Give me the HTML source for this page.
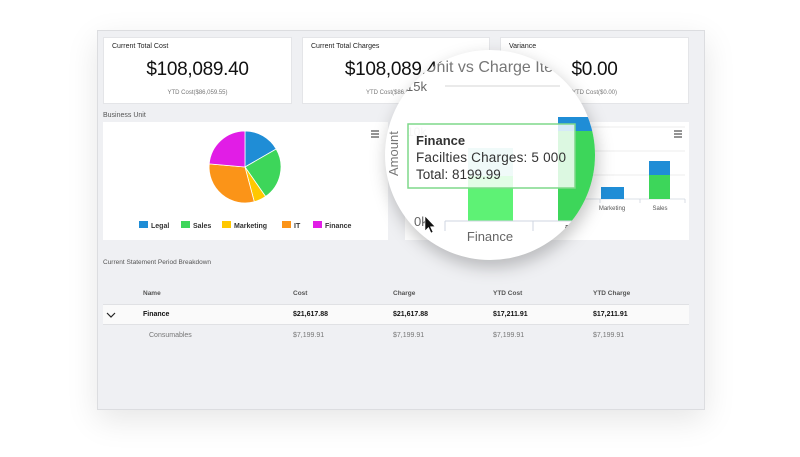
<!DOCTYPE html>
<html><head><meta charset="utf-8"><style>
*{margin:0;padding:0;box-sizing:border-box}
body{width:800px;height:457px;background:#fff;font-family:"Liberation Sans",sans-serif;position:relative;overflow:hidden;color:#222}
.panel{position:absolute;left:97px;top:30px;width:608px;height:380px;background:#eff0f3;border:1px solid #dcdde0;box-shadow:0 10px 30px rgba(0,0,0,0.10)}
.card{position:absolute;background:#fff;border:1px solid #e4e5e8}
.ct{position:absolute;left:8px;top:5px;font-size:7px;color:#222}
.big{position:absolute;left:0;right:0;top:21px;text-align:center;font-size:19px;letter-spacing:-0.3px;color:#111}
.sub{position:absolute;left:0;right:0;top:52px;text-align:center;font-size:6px;color:#777}
.abs{position:absolute}
.hdr{font-size:6.5px;color:#555;font-weight:bold}
.fin{font-size:7px;font-weight:bold;color:#111}
.con{font-size:7px;color:#777}
</style></head><body>
<div class="panel"></div>
<div class="card" style="left:103px;top:37px;width:189px;height:67px"><div class="ct">Current Total Cost</div><div class="big">$108,089.40</div><div class="sub">YTD Cost($86,059.55)</div></div>
<div class="card" style="left:302px;top:37px;width:188px;height:67px"><div class="ct">Current Total Charges</div><div class="big">$108,089.40</div><div class="sub">YTD Cost($86,059.55)</div></div>
<div class="card" style="left:500px;top:37px;width:189px;height:67px"><div class="ct">Variance</div><div class="big">$0.00</div><div class="sub">YTD Cost($0.00)</div></div>
<div class="abs" style="left:103px;top:112px;font-size:7px;color:#555">Business Unit</div>
<div class="card" style="left:103px;top:122px;width:285px;height:118px;border:none"></div>
<div class="card" style="left:405px;top:122px;width:284px;height:118px;border:none"></div>
<svg class="abs" style="left:0;top:0" width="800" height="457">
<g stroke="#fff" stroke-width="0.8">
<path d="M245 167 L245 131 A36 36 0 0 1 276.2 149 Z" fill="#1f8dd6"/>
<path d="M245 167 L276.2 149 A36 36 0 0 1 265.6 196.5 Z" fill="#3dd65a"/>
<path d="M245 167 L265.6 196.5 A36 36 0 0 1 254.3 201.8 Z" fill="#ffc800"/>
<path d="M245 167 L254.3 201.8 A36 36 0 0 1 209.2 163.9 Z" fill="#fb9418"/>
<path d="M245 167 L209.2 163.9 A36 36 0 0 1 245 131 Z" fill="#e11de6"/>
</g>
<g font-size="7" fill="#333" font-weight="bold">
<rect x="139" y="221" width="9" height="7" fill="#1f8dd6"/><text x="151" y="228">Legal</text>
<rect x="181" y="221" width="9" height="7" fill="#3dd65a"/><text x="193" y="228">Sales</text>
<rect x="222" y="221" width="9" height="7" fill="#ffc800"/><text x="234" y="228">Marketing</text>
<rect x="282" y="221" width="9" height="7" fill="#fb9418"/><text x="294" y="228">IT</text>
<rect x="313" y="221" width="9" height="7" fill="#e11de6"/><text x="325" y="228">Finance</text>
</g>
<g stroke="#555" stroke-width="1.2"><path d="M371 131h8M371 134h8M371 137h8M674 131h8M674 134h8M674 137h8"/></g>
<g stroke="#e6e6e6" stroke-width="0.7"><path d="M560 127H685M560 151H685M560 175H685"/></g>
<path d="M560 199H685M600 199v4M640 199v4M685 199v4" stroke="#cfd6e0" stroke-width="0.8"/>
<rect x="601" y="187" width="23" height="12" fill="#1f8dd6"/>
<rect x="649" y="161" width="21" height="14" fill="#1f8dd6"/><rect x="649" y="175" width="21" height="24" fill="#3dd65a"/>
<text x="612" y="210" font-size="6" fill="#555" text-anchor="middle">Marketing</text>
<text x="660" y="210" font-size="6" fill="#555" text-anchor="middle">Sales</text>
<defs><clipPath id="c"><circle cx="490" cy="155" r="105"/></clipPath>
<filter id="sh" x="-30%" y="-30%" width="160%" height="160%"><feGaussianBlur stdDeviation="8"/></filter></defs>
<circle cx="492" cy="162" r="106" fill="rgba(0,0,0,0.22)" filter="url(#sh)"/>
<circle cx="490" cy="155" r="105" fill="#fff"/>
<g clip-path="url(#c)">
<text x="425" y="72" font-size="16" fill="#777">Unit vs Charge Item</text>
<text x="406" y="91" font-size="13" fill="#666">15k</text>
<path d="M445 86H560" stroke="#e3e3e3" stroke-width="1.5"/>
<text x="407" y="136" font-size="12" fill="#ccc">10k</text>
<text transform="translate(398,176) rotate(-90)" font-size="13" fill="#777">Amount</text>
<rect x="468" y="148" width="45" height="73" fill="#5ef275"/>
<rect x="468" y="148" width="45" height="28" fill="#bde0f7" opacity="0.8"/>
<rect x="558" y="117" width="40" height="14" fill="#1f8dd6"/>
<rect x="558" y="131" width="40" height="90" fill="#3dd65a"/>
<path d="M445 221H600M445 221v10M533 221v10" stroke="#cfd6e0" stroke-width="1"/>
<text x="490" y="241" font-size="13" fill="#666" text-anchor="middle">Finance</text>
<text x="565" y="229" font-size="7.5" fill="#333" font-weight="bold">acilties Charges</text>
<text x="414" y="226" font-size="13" fill="#666">0k</text>
<rect x="408" y="124" width="167" height="64" fill="rgba(255,255,255,0.82)" stroke="#7ed88a" stroke-width="1.5"/>
<text x="416" y="145" font-size="13" font-weight="bold" fill="#333">Finance</text>
<text x="416" y="162" font-size="13.5" fill="#333" textLength="150">Facilties Charges: 5 000</text>
<text x="416" y="179" font-size="13.5" fill="#333">Total: 8199.99</text>
<path d="M425 216 L425 231 L428.5 227.5 L431 233 L433 232 L430.5 226.8 L435 226.5 Z" fill="#111" stroke="#fff" stroke-width="0.6"/>
</g>
</svg>
<div class="abs" style="left:103px;top:259px;font-size:6.5px;color:#555">Current Statement Period Breakdown</div>
<div class="abs" style="left:103px;top:304px;width:586px;height:21px;background:#fafafa;border-top:1px solid #e0e1e4;border-bottom:1px solid #e0e1e4"></div>
<div class="abs hdr" style="left:143px;top:290px">Name</div>
<div class="abs hdr" style="left:293px;top:290px">Cost</div>
<div class="abs hdr" style="left:393px;top:290px">Charge</div>
<div class="abs hdr" style="left:493px;top:290px">YTD Cost</div>
<div class="abs hdr" style="left:593px;top:290px">YTD Charge</div>
<svg class="abs" style="left:106px;top:312px" width="10" height="6"><path d="M1 1l4 4 4-4" stroke="#222" stroke-width="1.2" fill="none"/></svg>
<div class="abs fin" style="left:143px;top:311px">Finance</div>
<div class="abs fin" style="left:293px;top:311px">$21,617.88</div>
<div class="abs fin" style="left:393px;top:311px">$21,617.88</div>
<div class="abs fin" style="left:493px;top:311px">$17,211.91</div>
<div class="abs fin" style="left:593px;top:311px">$17,211.91</div>
<div class="abs con" style="left:149px;top:332px">Consumables</div>
<div class="abs con" style="left:293px;top:332px">$7,199.91</div>
<div class="abs con" style="left:393px;top:332px">$7,199.91</div>
<div class="abs con" style="left:493px;top:332px">$7,199.91</div>
<div class="abs con" style="left:593px;top:332px">$7,199.91</div>
</body></html>
